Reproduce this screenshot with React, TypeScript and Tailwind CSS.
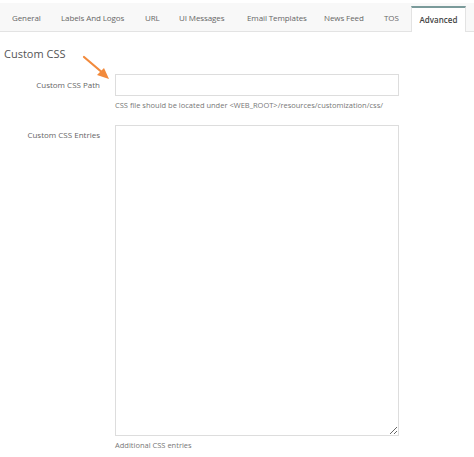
const tabs = [
  { label: 'General', width: 'w-[49px]' },
  { label: 'Labels And Logos', width: 'w-[84px]' },
  { label: 'URL', width: 'w-[34px]' },
  { label: 'UI Messages', width: 'w-[68px]' },
  { label: 'Email Templates', width: 'w-[77px]' },
  { label: 'News Feed', width: 'w-[60px]' },
  { label: 'TOS', width: 'w-[37px]' },
];

const App = () => {
  return (
    <div
      className="relative h-[457px] w-[474px] overflow-hidden bg-white text-[#555]"
      style={{ fontFamily: '"Open Sans", "Noto Sans", sans-serif' }}
    >
      {/* tab strip */}
      <div className="mt-[3px] flex h-[29px] items-end border-b border-[#e3e3e3] bg-[#f8f8f8] pl-[2px]">
        {tabs.map((tab) => (
          <div
            key={tab.label}
            className={`flex h-[26px] shrink-0 items-center whitespace-nowrap pl-[10px] text-[8px] tracking-[-0.1px] text-[#666] ${tab.width}`}
          >
            {tab.label}
          </div>
        ))}
        <div className="-mb-px flex h-[26px] w-[55px] shrink-0 items-center justify-center whitespace-nowrap border-x border-t-2 border-x-[#e3e3e3] border-t-[#7a9a9a] bg-white text-[8px] font-semibold text-[#444]">
          Advanced
        </div>
      </div>

      <div className="px-[4px] pt-[15px]">
        <h2 className="text-[11px] leading-[14px] text-[#555]">Custom CSS</h2>

        <div className="mt-[13px] flex items-start">
          <label className="w-[96px] pt-[5px] text-right text-[8px] text-[#666]">
            Custom CSS Path
          </label>
          <div className="ml-[15px] flex flex-col">
            <input className="h-[22px] w-[284px] border border-[#ddd] bg-white" />
            <span className="mt-[4px] text-[7.5px] text-[#777]">
              CSS file should be located under &lt;WEB_ROOT&gt;/resources/customization/css/
            </span>
          </div>
        </div>

        <div className="mt-[14px] flex items-start">
          <label className="w-[96px] pt-[4px] text-right text-[8px] text-[#666]">
            Custom CSS Entries
          </label>
          <div className="ml-[15px] flex flex-col">
            <textarea className="h-[311px] w-[284px] resize border border-[#ddd] bg-white" />
            <span className="mt-[4px] text-[7.5px] text-[#777]">Additional CSS entries</span>
          </div>
        </div>
      </div>

      {/* annotation arrow */}
      <svg className="absolute left-[80px] top-[53px]" width="36" height="32" viewBox="0 0 36 32">
        <line x1="4" y1="4" x2="24" y2="21" stroke="#f28a3c" strokeWidth="2.2" strokeLinecap="round" />
        <polygon points="29,26 17,22 24,15" fill="#f28a3c" />
      </svg>
    </div>
  );
};

export default App;
